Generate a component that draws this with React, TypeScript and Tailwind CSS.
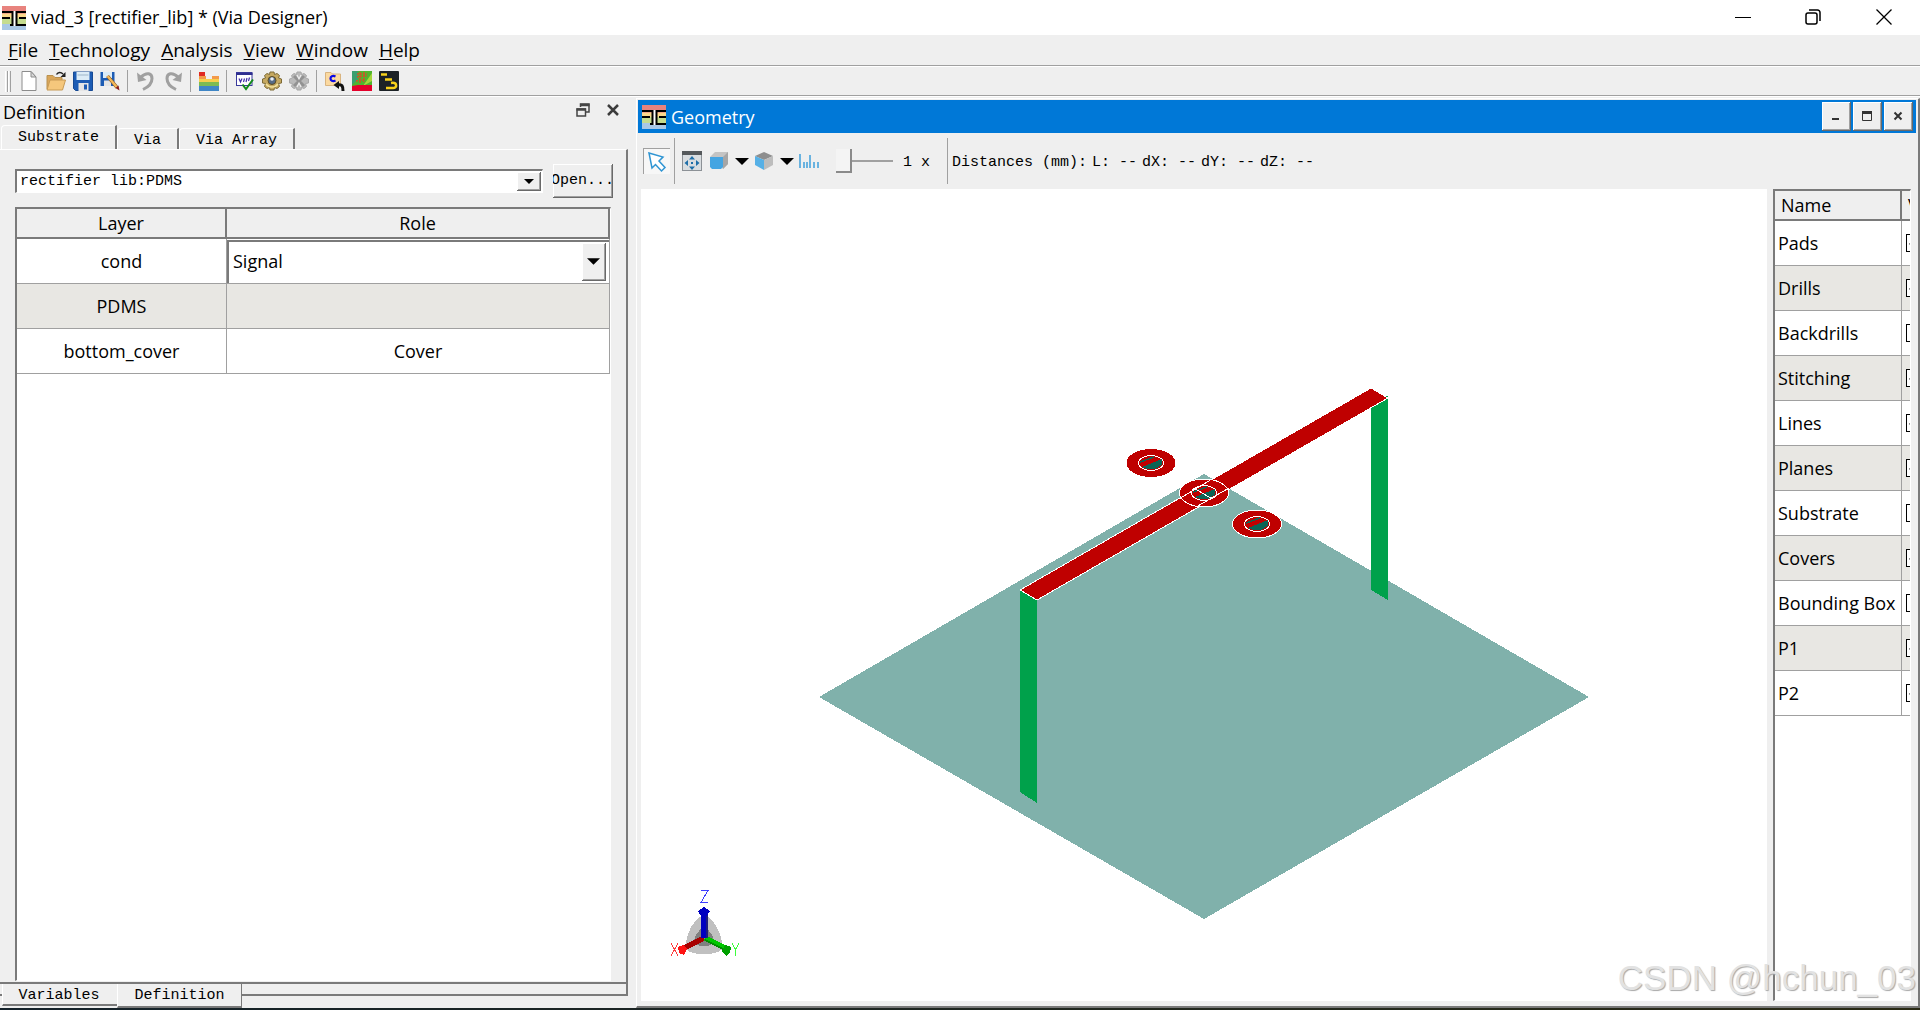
import { useState, type ReactNode } from 'react'
import clsx from 'clsx'

const UI_FONT = "font-['Open_Sans','Noto_Sans',sans-serif]"
const MONO_FONT = "font-['Liberation_Mono',monospace]"
const RAISED =
  'bg-[#efefef] border-r border-b border-[#696969] shadow-[inset_1px_1px_0_#ffffff,inset_-1px_-1px_0_#a0a0a0]'

const MENUS = ['File', 'Technology', 'Analysis', 'View', 'Window', 'Help']

interface Layer {
  name: string
  role: string
  editable?: boolean
}

const LAYERS: Layer[] = [
  { name: 'cond', role: 'Signal', editable: true },
  { name: 'PDMS', role: '' },
  { name: 'bottom_cover', role: 'Cover' },
]

const OBJECTS = [
  { name: 'Pads', visible: true },
  { name: 'Drills', visible: true },
  { name: 'Backdrills', visible: false },
  { name: 'Stitching', visible: true },
  { name: 'Lines', visible: true },
  { name: 'Planes', visible: true },
  { name: 'Substrate', visible: false },
  { name: 'Covers', visible: true },
  { name: 'Bounding Box', visible: false },
  { name: 'P1', visible: true },
  { name: 'P2', visible: true },
]

function AppIcon() {
  return (
    <svg viewBox="0 0 24 24" className="h-6 w-6 shrink-0">
      <rect width="24" height="6" fill="#e8837e" />
      <rect y="5" width="24" height="4" fill="#f2a98a" />
      <rect y="8" width="24" height="4" fill="#fbd98c" />
      <rect y="12" width="24" height="6" fill="#c5dc8f" />
      <rect y="18" width="24" height="6" fill="#a9c8e6" />
      <rect x="11" y="5" width="3" height="15" fill="#fff" />
      <path d="M0 6H10.500V19H8M24 6H14.500V19H24M0 12H8M17 12H24" fill="none" stroke="#000" strokeWidth="2" />
    </svg>
  )
}

function Icon({ children }: { children: ReactNode }) {
  return (
    <svg viewBox="0 0 20 20" className="h-5 w-5 shrink-0">
      {children}
    </svg>
  )
}

const GEAR =
  'M8 1H12L12.500 3.500L15 2.500L17.500 4.500L16.500 7L19.500 8V12L16.500 12.500L17.500 15.500L15 17.500L12.500 16.500L12 19H8L7.500 16.500L5 17.500L2.500 15.500L3.500 12.500L.5 12V8L3.500 7L2.500 4.500L5 2.500L7.500 3.500Z'

const newIcon = (
  <Icon>
    <path d="M3 .5H12L17 6V19.500H3Z" fill="#fff" stroke="#8c8c8c" />
    <path d="M12 .5V6H17Z" fill="#d8d8d8" stroke="#8c8c8c" />
  </Icon>
)

const openIcon = (
  <Icon>
    <path d="M1 4.500H7L9 6.500H16V18H1Z" fill="#d9a65a" stroke="#b9904e" />
    <path d="M4 9H19.500L16.500 19H1Z" fill="#f5c77c" stroke="#c79a55" />
    <path d="M10.500 3.500C12 .8 15 .8 17 3" fill="none" stroke="#222" strokeWidth="1.500" />
    <path d="M19.500 1V6H14.500Z" fill="#222" />
  </Icon>
)

const saveIcon = (
  <Icon>
    <path d="M.5 1H19.500V19.500H2.500L.5 17.500Z" fill="#1d5cb4" stroke="#174a94" />
    <rect x="3.500" y="1" width="13" height="8" fill="#dcecf7" />
    <path d="M4.500 4H15.500" stroke="#9fb6c9" />
    <rect x="5.500" y="12" width="10" height="8" fill="#e5e5e5" />
    <rect x="11" y="13.500" width="3" height="5" fill="#1d5cb4" />
  </Icon>
)

const saveAsIcon = (
  <Icon>
    <path d="M.5 1H14.500V15H.5Z" fill="#1d5cb4" />
    <rect x="3" y="1" width="9" height="6" fill="#dcecf7" />
    <rect x="4" y="9.500" width="7" height="5.500" fill="#e5e5e5" />
    <path d="M7.500 5L17 16.500" stroke="#8a5a24" strokeWidth="3.500" />
    <path d="M7.500 5L17 16.500" stroke="#f4b95a" strokeWidth="2.200" />
    <path d="M15.500 17L18.500 14.500L19.500 19.500Z" fill="#8b1d1d" />
  </Icon>
)

const undoIcon = (
  <Icon>
    <path d="M5 6C11 .5 16 2.500 16 7.500C16 12 12.500 16 7 18.500" fill="none" stroke="#a0a0a0" strokeWidth="3" />
    <path d="M1 1.500L2 11L10.500 9Z" fill="#a0a0a0" />
  </Icon>
)

const redoIcon = (
  <Icon>
    <path d="M15 6C9 .5 4 2.500 4 7.500C4 12 7.500 16 13 18.500" fill="none" stroke="#a0a0a0" strokeWidth="3" />
    <path d="M19 1.500L18 11L9.500 9Z" fill="#a0a0a0" />
  </Icon>
)

const layersIcon = (
  <Icon>
    <rect width="6" height="4" y="1" fill="#e02a22" />
    <rect y="5" width="7" height="4" fill="#f39a4a" />
    <rect x="13" y="5" width="7" height="4" fill="#f39a4a" />
    <rect y="8" width="20" height="4" fill="#f7cf4d" />
    <rect y="11" width="20" height="4" fill="#7dbb52" />
    <rect y="15" width="20" height="5" fill="#3f86c6" />
  </Icon>
)

const checkFormIcon = (
  <Icon>
    <rect x="1.500" y="1.500" width="15.500" height="13" fill="#fff" stroke="#3a3a9c" />
    <path d="M1 3H17.500" stroke="#2f2f8f" strokeWidth="2" />
    <path d="M4 7.500L5.500 11L7 7.500M8.500 11L9.500 7.500M11 11L12 7M13.500 10L14.500 6.500" stroke="#3d2ba8" strokeWidth="1.200" fill="none" />
    <path d="M7.500 13.500L11 18L18 8.500" fill="none" stroke="#138a1c" strokeWidth="2" />
  </Icon>
)

const gearIcon = (
  <Icon>
    <path d={GEAR} fill="#c5a860" stroke="#7d6a36" />
    <circle cx="10" cy="9.500" r="4" fill="#566b86" stroke="#5e4c1e" />
    <circle cx="10" cy="8" r="1.800" fill="#e9eef5" />
    <path d="M4 13C7 17 13 17 16 13" fill="none" stroke="#f3e29b" strokeWidth="1.500" />
  </Icon>
)

const gearOffIcon = (
  <Icon>
    <path d={GEAR} fill="#bababa" stroke="#a8a8a8" />
    <path d="M5 5L15 15M15 5L5 15" stroke="#929292" strokeWidth="3" />
    <path d="M8 4L10 8L12 4M8 16L10 12L12 16" stroke="#efefef" strokeWidth="1.200" fill="none" />
  </Icon>
)

const importIcon = (
  <Icon>
    <path d="M.5 1.500H6L7.500 3H15.500V14.500H.5Z" fill="#fbd9a0" stroke="#d9b480" />
    <path d="M10.500 5.500C7.500 4 5.500 5.500 5.500 7.500C5.500 9.500 7.500 11 10.500 9.500" fill="none" stroke="#0a0ae6" strokeWidth="2.200" />
    <path d="M13 14C17 13 18 15 18 20" fill="none" stroke="#111" strokeWidth="3" />
    <path d="M14 10V18L8.500 14Z" fill="#111" />
  </Icon>
)

const fieldIcon = (
  <Icon>
    <rect width="20" height="16" fill="#4fb52e" />
    <path d="M0 0H6V8L0 14Z" fill="#39a070" />
    <path d="M20 2V10L11 15Z" fill="#a6d63c" />
    <path d="M5 3L15 3M5 6L15 5M4 10L13 9M8 1V12M12 1V11" stroke="#d0522a" strokeWidth="1.500" strokeDasharray="2 1" />
    <path d="M0 15L6 14H20V20H0Z" fill="#e4002b" />
  </Icon>
)

const traceIcon = (
  <Icon>
    <rect width="20" height="20" rx="1" fill="#1c2226" />
    <path d="M2 3.500H8M6 8.500H13M12 12C18.500 11 18.500 17 14 17H7" fill="none" stroke="#f8d21c" strokeWidth="2.500" />
  </Icon>
)

const TOOL_GROUPS = [
  [
    { label: 'New', icon: newIcon },
    { label: 'Open', icon: openIcon },
    { label: 'Save', icon: saveIcon },
    { label: 'Save As', icon: saveAsIcon },
  ],
  [
    { label: 'Undo', icon: undoIcon },
    { label: 'Redo', icon: redoIcon },
  ],
  [{ label: 'Substrate Editor', icon: layersIcon }],
  [
    { label: 'Check', icon: checkFormIcon },
    { label: 'Simulate', icon: gearIcon },
    { label: 'Stop', icon: gearOffIcon },
  ],
  [
    { label: 'Import', icon: importIcon },
    { label: 'Field View', icon: fieldIcon },
    { label: 'Layout', icon: traceIcon },
  ],
]

function TitleBar() {
  return (
    <header className="flex h-[35px] shrink-0 items-center bg-white pl-[2px]">
      <AppIcon />
      <h1 className="ml-[5px] flex-1 pb-px text-[18px] leading-6">viad_3 [rectifier_lib] * (Via Designer)</h1>
      <div className="flex pb-px">
        <button aria-label="Minimize" className="flex h-[34px] w-[70px] items-center justify-center">
          <svg viewBox="0 0 16 16" className="h-4 w-4">
            <path d="M0 8.500H16" stroke="#000" />
          </svg>
        </button>
        <button aria-label="Restore" className="flex h-[34px] w-[70px] items-center justify-center">
          <svg viewBox="0 0 16 16" className="h-4 w-4" fill="none" stroke="#000" strokeWidth="1.500">
            <rect x="1" y="4" width="11" height="11" rx="2" />
            <path d="M4 1H12.500A2.500 2.500 0 0 1 15 3.500V12" />
          </svg>
        </button>
        <button aria-label="Close" className="flex h-[34px] w-[72px] items-center justify-center">
          <svg viewBox="0 0 16 16" className="h-4 w-4">
            <path d="M.5 .5L15.500 15.500M15.500 .5L.5 15.500" stroke="#000" strokeWidth="1.300" />
          </svg>
        </button>
      </div>
    </header>
  )
}

function MenuBar() {
  return (
    <nav className="flex h-[31px] shrink-0 items-center gap-[11px] border-b border-[#a0a0a0] pl-2">
      {MENUS.map((m) => (
        <button key={m} className="text-[19px] leading-6">
          <span className="underline decoration-1 underline-offset-2">{m[0]}</span>
          {m.slice(1)}
        </button>
      ))}
    </nav>
  )
}

function ToolBar() {
  return (
    <div className="flex h-[30px] shrink-0 items-center border-t border-b border-t-white border-b-[#a0a0a0] pl-[5px]">
      <span className="mr-1 flex">
        <span className="h-[21px] w-[3px] border-r border-l border-r-[#a0a0a0] border-l-white" />
        <span className="h-[21px] w-[3px] border-r border-l border-r-[#a0a0a0] border-l-white" />
      </span>
      {TOOL_GROUPS.map((group, i) => (
        <div key={i} className="flex items-center">
          {i > 0 && <span className="mx-1 h-[22px] w-px bg-[#a0a0a0]" />}
          {group.map((t) => (
            <button key={t.label} aria-label={t.label} title={t.label} className="flex w-[27px] justify-center">
              {t.icon}
            </button>
          ))}
        </div>
      ))}
    </div>
  )
}

function Arrow({ className }: { className: string }) {
  return (
    <svg viewBox="0 0 14 7" className={className}>
      <path d="M0 0H14L7 7Z" fill="#000" />
    </svg>
  )
}

function SubstratePane() {
  const [substrate, setSubstrate] = useState('rectifier lib:PDMS')
  const [role, setRole] = useState('Signal')

  return (
    <div className="flex min-h-0 flex-1 flex-col border-t border-r-2 border-b-2 border-t-white border-r-[#7a7a7a] border-b-[#7a7a7a] pt-[14px] pr-[13px] pb-px pl-[15px]">
      <div className="flex h-[34px] shrink-0 items-center gap-[10px]">
        <div className="relative flex-1 border-t-2 border-r border-b border-l-2 border-t-[#7a7a7a] border-r-white border-b-white border-l-[#7a7a7a] bg-white">
          <select
            aria-label="Substrate"
            value={substrate}
            onChange={(e) => setSubstrate(e.target.value)}
            className={clsx('block h-[21px] w-full appearance-none bg-white pl-[3px] text-[15px] leading-5', MONO_FONT)}
          >
            <option>rectifier lib:PDMS</option>
          </select>
          <span className={clsx('pointer-events-none absolute inset-y-px right-px flex w-6 items-center justify-center', RAISED)}>
            <Arrow className="h-[5px] w-[10px]" />
          </span>
        </div>
        <button className={clsx('flex h-full w-[60px] items-center justify-center overflow-hidden pt-[2px] text-[15px] whitespace-nowrap', MONO_FONT, RAISED)}>
          Open...
        </button>
      </div>

      <div className="mt-[9px] mr-[2px] min-h-0 flex-1 overflow-hidden border-t-2 border-r border-b border-l-2 border-t-[#7a7a7a] border-r-white border-b-white border-l-[#7a7a7a] bg-white">
        <table className="w-full table-fixed border-separate border-spacing-0 text-center text-[18px] leading-6">
          <thead>
            <tr className="h-[30px]">
              <th className="w-[210px] border-r-2 border-b-2 border-[#7a7a7a] bg-[#efefef] p-0 font-normal">Layer</th>
              <th className="border-r-2 border-b-2 border-[#7a7a7a] bg-[#efefef] p-0 font-normal">Role</th>
            </tr>
          </thead>
          <tbody>
            {LAYERS.map((l, i) => (
              <tr key={l.name} className={clsx('h-[45px]', i % 2 === 1 && 'bg-[#e8e7e3]')}>
                <td className="border-r border-b border-[#a0a0a0] p-0">{l.name}</td>
                <td className="border-r border-b border-[#a0a0a0] p-0">
                  {l.editable ? (
                    <div className="relative h-[43px] border-t-2 border-l-2 border-[#7a7a7a]">
                      <select
                        aria-label={`Role of ${l.name}`}
                        value={role}
                        onChange={(e) => setRole(e.target.value)}
                        className="block h-full w-full appearance-none bg-white pb-[2px] pl-1 text-[18px]"
                      >
                        <option>Signal</option>
                        <option>Cover</option>
                      </select>
                      <span className={clsx('pointer-events-none absolute top-px right-[3px] bottom-[2px] flex w-6 items-center justify-center', RAISED)}>
                        <Arrow className="h-[7px] w-[13px]" />
                      </span>
                    </div>
                  ) : (
                    l.role
                  )}
                </td>
              </tr>
            ))}
          </tbody>
        </table>
      </div>
    </div>
  )
}

function DefinitionDock() {
  const [tab, setTab] = useState('Substrate')

  return (
    <aside className="flex w-[628px] shrink-0 flex-col">
      <div className="flex h-[29px] shrink-0 items-center pl-[3px]">
        <h2 className="flex-1 text-[18px] leading-6">Definition</h2>
        <button aria-label="Float" className="mr-[17px] pb-1">
          <svg viewBox="0 0 14 14" className="h-[14px] w-[14px]" fill="none" stroke="#444">
            <path d="M4.500 4V1H13V9H10" strokeWidth="1.500" />
            <path d="M4 2H13.500M.5 6.500H10" strokeWidth="2.500" />
            <rect x="1" y="6" width="8.500" height="7" strokeWidth="1.500" />
          </svg>
        </button>
        <button aria-label="Close dock" className="mr-[9px] pb-1">
          <svg viewBox="0 0 12 12" className="h-3 w-3">
            <path d="M1 1L11 11M11 1L1 11" stroke="#3c3c3c" strokeWidth="2.500" />
          </svg>
        </button>
      </div>

      <div role="tablist" className={clsx('flex h-[23px] shrink-0 items-end pl-px text-[15px] leading-5', MONO_FONT)}>
        {['Substrate', 'Via', 'Via Array'].map((t) => (
          <button
            key={t}
            role="tab"
            aria-selected={t === tab}
            onClick={() => setTab(t)}
            className={clsx(
              'rounded-tl-sm border-t border-r-2 border-l border-t-white border-r-[#7a7a7a] border-l-white px-4',
              t === tab ? 'h-6' : 'h-[21px] pt-[2px]',
            )}
          >
            {t}
          </button>
        ))}
      </div>

      <SubstratePane />

      <div className="h-[12px] shrink-0 border-r-2 border-b-2 border-[#7a7a7a]" />
      <div role="tablist" className={clsx('-mt-[12px] flex h-[24px] shrink-0 items-start pl-[2px] text-[15px] leading-5', MONO_FONT)}>
        <button role="tab" aria-selected={false} className="h-[22px] w-[115px] border-b-2 border-l border-b-[#7a7a7a] border-l-white bg-[#efefef] pt-[2px] pr-[2px]">
          Variables
        </button>
        <button role="tab" aria-selected className="h-6 w-[125px] border-r border-b-2 border-l border-r-[#7a7a7a] border-b-[#7a7a7a] border-l-white bg-[#efefef] pt-[2px]">
          Definition
        </button>
      </div>
    </aside>
  )
}

function GeometryToolBar() {
  const [zoom, setZoom] = useState(1)

  return (
    <div className={clsx('flex h-14 shrink-0 items-center pl-[5px] text-[15px] leading-5', MONO_FONT)}>
      <button aria-label="Select" className="flex h-[26px] w-[27px] items-center justify-center border-t border-l border-[#a0a0a0] bg-[#f7f7f7]">
        <svg viewBox="0 0 20 22" className="h-[22px] w-5">
          <path d="M2 2L16 6L12 10L18 16.500L14.500 20L8.500 13.500L5 17Z" fill="#fff" stroke="#2f95d3" strokeWidth="1.500" />
        </svg>
      </button>
      <span className="mx-1 h-[46px] w-px bg-[#a0a0a0]" />
      <button aria-label="Fit view" className="ml-[3px]">
        <Icon>
          <rect x=".5" y=".5" width="19" height="19" fill="#d9dde0" stroke="#8c9196" />
          <rect width="20" height="4" fill="#55595c" />
          <path d="M10 5L13 8.500H7ZM10 19L7 15.500H13ZM2.500 12L6 9V15ZM17.500 12L14 9V15Z" fill="#1e6ea8" />
          <rect x="9" y="11" width="2" height="2" fill="#1e6ea8" />
        </Icon>
      </button>
      <button aria-label="Face view" className="ml-[7px] flex items-center gap-[6px]">
        <Icon>
          <path d="M1 6L6 1H19V13L14 18Z" fill="#c4c4c4" />
          <path d="M14 6L19 1V13L14 18Z" fill="#a6a6a6" />
          <path d="M1 6H14V16L12 18H3L1 16Z" fill="#45a5e2" />
        </Icon>
        <Arrow className="h-[7px] w-[14px]" />
      </button>
      <button aria-label="Isometric view" className="ml-[5px] flex items-center gap-[6px]">
        <Icon>
          <path d="M10 1L19 5L10 9L1 5Z" fill="#8e8e8e" />
          <path d="M19 5V14L10 19V9Z" fill="#bdbdbd" />
          <path d="M1 5L10 9V19L1 14Z" fill="#56b0e6" />
        </Icon>
        <Arrow className="h-[7px] w-[14px]" />
      </button>
      <button aria-label="Scale" className="ml-[5px]">
        <Icon>
          <path d="M1 3V17M5 11V17M8 11V17M11 4V17M15 11V17M19 11V17" stroke="#3fa0dc" strokeWidth="1.500" />
        </Icon>
      </button>
      <input
        type="range"
        aria-label="Vertical scale"
        min={1}
        max={20}
        value={zoom}
        onChange={(e) => setZoom(Number(e.target.value))}
        className="ml-[17px] h-6 w-[57px] appearance-none bg-[linear-gradient(#a0a0a0,#a0a0a0)] bg-[length:100%_2px] bg-center bg-no-repeat [&::-webkit-slider-thumb]:h-6 [&::-webkit-slider-thumb]:w-4 [&::-webkit-slider-thumb]:appearance-none [&::-webkit-slider-thumb]:border-r-2 [&::-webkit-slider-thumb]:border-b-2 [&::-webkit-slider-thumb]:border-[#8a8a8a] [&::-webkit-slider-thumb]:bg-[#f4f4f4]"
      />
      <span className="ml-[10px] pt-[3px]">{zoom} x</span>
      <span className="mr-1 ml-[17px] h-[46px] w-px bg-[#a0a0a0]" />
      <div className="flex gap-[5px] pt-[3px] whitespace-nowrap">
        <span>Distances (mm):</span>
        <span>L: --</span>
        <span>dX: --</span>
        <span>dY: --</span>
        <span>dZ: --</span>
      </div>
    </div>
  )
}

function Pad({ cx, cy, outlined }: { cx: number; cy: number; outlined?: boolean }) {
  return (
    <g>
      <ellipse cx={cx} cy={cy} rx="24.500" ry="14" fill="#bf0000" stroke={outlined ? '#fff' : 'none'} />
      <ellipse cx={cx} cy={cy} rx="12.500" ry="7.500" fill="#bf0000" stroke="#fff" />
      <path d={`M${cx - 9} ${cy + 4}L${cx + 11} ${cy - 4}L${cx + 11} ${cy + 2}L${cx + 4} ${cy + 6}H${cx - 4}Z`} fill="#0b6455" />
      <path d={`M${cx - 11} ${cy - 1}L${cx + 3} ${cy - 6}`} stroke="#0b6455" strokeWidth="1.500" />
    </g>
  )
}

// Scene coordinates are viewport pixels of the isometric camera
function Scene() {
  return (
    <svg viewBox="641 189 1126 812" className="h-full w-full" shapeRendering="crispEdges">
      <path d="M1204 474L1589 697L1204 919L819 697Z" fill="#80b1ab" />
      <path d="M1371 400L1388 396V600L1371 590Z" fill="#00a14b" />
      <path d="M1020 590L1037 600V803L1020 792Z" fill="#00a14b" />
      <Pad cx={1151} cy={463} />
      <path d="M1020 590L1371 388L1388 398L1037 600Z" fill="#bf0000" stroke="#fff" />
      <Pad cx={1204} cy={493} outlined />
      <path d="M1179 499L1212 479M1196 507L1229 488M1194 488L1212 499" stroke="#fff" fill="none" />
      <Pad cx={1257} cy={524} outlined />

      {/* Axis triad */}
      <path d="M704 914C694 919 686 932 685 949C694 956 714 956 723 949C722 932 714 919 704 914Z" fill="#c0c0c0" />
      <path d="M704 927C698 930 694 937 694 942C698 948 710 948 714 942C714 937 710 930 704 927Z" fill="#808080" />
      <path d="M704 938L684 948" stroke="#a80000" strokeWidth="5" />
      <path d="M705 938L725 948" stroke="#00c800" strokeWidth="5" />
      <path d="M705 940L725 950" stroke="#008c00" strokeWidth="2" />
      <path d="M704 914V938" stroke="#0000c0" strokeWidth="6" />
      <path d="M707 914V938" stroke="#1c1c80" strokeWidth="2" />
      <path d="M704 907L710 911L707 916H701L698 911Z" fill="#0000c0" />
      <path d="M678 947L683 945L687 949L684 955L679 953Z" fill="#ff1414" />
      <path d="M725 945L731 947L730 953L726 956L722 951Z" fill="#00a000" />
      <path d="M701 890.500H708L701 902.500H708" fill="none" stroke="#3c3cff" />
      <path d="M671 943L678 956M678 943L671 956" stroke="#ff3c3c" />
      <path d="M732 943L735.500 949.500V955.500M739 943L735.500 949.500" stroke="#3cff3c" fill="none" />
    </svg>
  )
}

function ObjectList() {
  const [visible, setVisible] = useState(() => OBJECTS.map((o) => o.visible))

  return (
    <div className="w-[138px] shrink-0 overflow-hidden border-t-2 border-r border-b border-l-2 border-t-[#7a7a7a] border-r-white border-b-white border-l-[#7a7a7a] bg-white">
      <table className="w-[210px] table-fixed border-separate border-spacing-0 text-left text-[18px] leading-6">
        <thead>
          <tr className="h-[30px] bg-[#efefef]">
            <th className="w-[127px] border-r-2 border-b-2 border-[#7a7a7a] p-0 pl-[6px] font-normal">Name</th>
            <th className="border-b-2 border-[#7a7a7a] p-0 pl-[6px] font-normal">Visible</th>
          </tr>
        </thead>
        <tbody>
          {OBJECTS.map((o, i) => (
            <tr key={o.name} className={clsx('h-[45px]', i % 2 === 1 && 'bg-[#e8e7e3]')}>
              <td className="border-r border-b border-[#a0a0a0] p-0 pl-[3px] whitespace-nowrap">
                <label htmlFor={`show-${i}`}>{o.name}</label>
              </td>
              <td className="border-b border-[#a0a0a0] p-0 pl-1">
                <div className="grid h-[18px] w-[18px]">
                  <input
                    id={`show-${i}`}
                    type="checkbox"
                    checked={visible[i]}
                    onChange={() => setVisible((prev) => prev.map((v, n) => (n === i ? !v : v)))}
                    className="col-start-1 row-start-1 h-[18px] w-[18px] appearance-none border border-black bg-white"
                  />
                  {visible[i] && (
                    <svg viewBox="0 0 18 18" className="pointer-events-none col-start-1 row-start-1 h-[18px] w-[18px]">
                      <path d="M4 9L7.500 12.500L14 5.500" fill="none" stroke="#000" strokeWidth="2.500" />
                    </svg>
                  )}
                </div>
              </td>
            </tr>
          ))}
        </tbody>
      </table>
    </div>
  )
}

function GeometryWindow() {
  const button = clsx('flex h-[29px] w-[29px] items-center justify-center', RAISED)

  return (
    <section className="mt-px ml-2 flex min-w-0 flex-1 flex-col border-t border-r-2 border-b-2 border-l border-t-white border-r-[#7a7a7a] border-b-[#7a7a7a] border-l-white pt-px pl-px">
      <div className="mr-[2px] flex h-[33px] shrink-0 items-center bg-[#0078d7] pr-[3px] pl-1 text-white">
        <AppIcon />
        <h2 className="ml-[5px] flex-1 text-[18px] leading-6">Geometry</h2>
        <div className="flex gap-[2px]">
          <button aria-label="Minimize window" className={button}>
            <svg viewBox="0 0 10 10" className="h-[10px] w-[10px]">
              <path d="M1 8H8" stroke="#333" strokeWidth="2" />
            </svg>
          </button>
          <button aria-label="Maximize window" className={button}>
            <svg viewBox="0 0 10 10" className="h-[10px] w-[10px]">
              <path d="M.5 1V9.500H9.500V1" fill="none" stroke="#333" />
              <path d="M0 1.500H10" stroke="#333" strokeWidth="3" />
            </svg>
          </button>
          <button aria-label="Close window" className={button}>
            <svg viewBox="0 0 10 10" className="h-[10px] w-[10px]">
              <path d="M1.500 1.500L8.500 8.500M8.500 1.500L1.500 8.500" stroke="#333" strokeWidth="2" />
            </svg>
          </button>
        </div>
      </div>
      <GeometryToolBar />
      <div className="mr-[7px] mb-[5px] ml-[3px] flex min-h-0 flex-1 gap-[6px]">
        <div className="min-w-0 flex-1 bg-white">
          <Scene />
        </div>
        <ObjectList />
      </div>
    </section>
  )
}

export default function App() {
  return (
    <div className={clsx('relative flex h-screen flex-col overflow-hidden bg-[#efefef] text-black', UI_FONT)}>
      <TitleBar />
      <MenuBar />
      <ToolBar />
      <main className="flex min-h-0 flex-1 border-t border-white">
        <DefinitionDock />
        <GeometryWindow />
      </main>
      <footer className="h-[2px] shrink-0 bg-linear-to-r from-[#14222a] to-[#2a2a14]" />
      <p className="pointer-events-none absolute right-1 bottom-2 font-['Liberation_Sans',sans-serif] text-[35px] leading-[48px] text-[#e2e2e2] [text-shadow:1px_1px_1px_#a8a8a8]">
        CSDN @hchun_03
      </p>
    </div>
  )
}
